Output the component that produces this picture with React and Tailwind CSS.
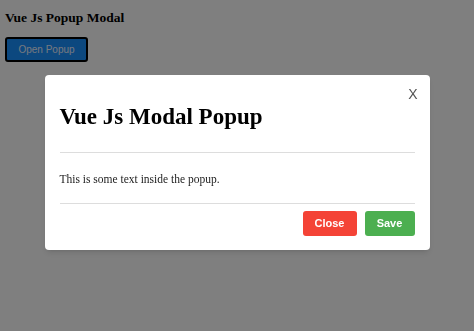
import { useState } from "react";

function App() {
    const [open, setOpen] = useState(true);

    return (
        <div className="relative min-h-[331px] bg-white p-[5px] font-['Liberation_Serif',serif] text-black">
            <h3 className="mt-[5px] text-[13.5px] leading-[16px] font-bold">Vue Js Popup Modal</h3>
            <button
                onClick={() => setOpen(true)}
                className="mt-[11px] h-[25px] w-[83px] rounded-[3px] border-2 border-black bg-[#1890ff] font-['Liberation_Sans',sans-serif] text-[10px] text-[#eaf2ff]"
            >
                Open Popup
            </button>

            {open && (
                <div className="fixed inset-0 flex items-center justify-center bg-black/50">
                    <div className="mt-[-6px] w-[385px] rounded-[4px] bg-white px-[15px] pt-[10px] pb-[14px] shadow-md">
                        <div className="flex h-[16px] justify-end">
                            <button
                                onClick={() => setOpen(false)}
                                className="mr-[-3px] mt-[1px] font-['Liberation_Sans',sans-serif] text-[14px] leading-[16px] text-[#555]"
                            >
                                X
                            </button>
                        </div>
                        <h1 className="mt-[2px] text-[23px] leading-[27px] font-bold">Vue Js Modal Popup</h1>
                        <hr className="mt-[22px] border-[#ddd]" />
                        <p className="mt-[19px] text-[11.5px] leading-[14px] text-[#222]">This is some text inside the popup.</p>
                        <hr className="mt-[17px] border-[#ddd]" />
                        <div className="mt-[7px] flex justify-end gap-[8px] font-['Liberation_Sans',sans-serif] text-[11px] font-bold text-white">
                            <button onClick={() => setOpen(false)} className="h-[25px] w-[54px] rounded-[3px] bg-[#f44336]">
                                Close
                            </button>
                            <button className="h-[25px] w-[50px] rounded-[3px] bg-[#4caf50]">
                                Save
                            </button>
                        </div>
                    </div>
                </div>
            )}
        </div>
    );
}

export default App;
